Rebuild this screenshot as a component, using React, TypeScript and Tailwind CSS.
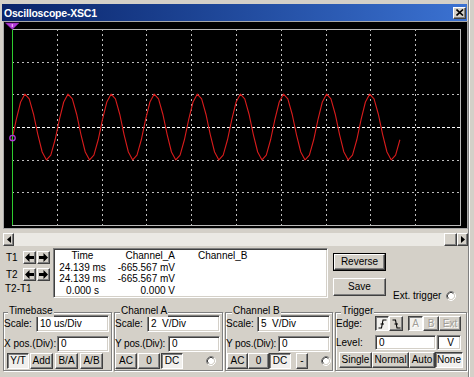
import React from "react";

const raised =
  "bg-[#d4d0c8] border border-t-white border-l-white border-r-[#404040] border-b-[#404040] shadow-[inset_-1px_-1px_0_#808080]";
const pressed =
  "bg-[#f1f0ed] border border-t-[#404040] border-l-[#404040] border-r-white border-b-white shadow-[inset_1px_1px_0_#808080]";
const sunken =
  "bg-white border border-t-[#808080] border-l-[#808080] border-r-white border-b-white shadow-[inset_1px_1px_0_#404040,inset_-1px_-1px_0_#d4d0c8]";
const etched =
  "relative border border-[#808080] shadow-[inset_1px_1px_0_#fff,1px_1px_0_#fff]";
const disabledText = "text-[#a09d96] [text-shadow:1px_1px_0_#fff]";

function Btn({
  className,
  on,
  children,
}: {
  className: string;
  on?: boolean;
  children?: React.ReactNode;
}) {
  return (
    <div
      className={`${on ? pressed : raised} flex items-center justify-center shrink-0 whitespace-nowrap ${className}`}
    >
      {children}
    </div>
  );
}

function Radio() {
  return (
    <svg width="10" height="10" viewBox="0 0 10 10" className="shrink-0">
      <circle cx="5" cy="5" r="3.5" fill="#fff" />
      <path d="M1.82 8.18 A4.5 4.5 0 0 1 8.18 1.82" fill="none" stroke="#808080" strokeWidth="1" />
      <path d="M2.5 7.5 A3.5 3.5 0 0 1 7.5 2.5" fill="none" stroke="#404040" strokeWidth="1" />
      <path d="M8.18 1.82 A4.5 4.5 0 0 1 1.82 8.18" fill="none" stroke="#ffffff" strokeWidth="1" />
      <path d="M7.5 2.5 A3.5 3.5 0 0 1 2.5 7.5" fill="none" stroke="#d4d0c8" strokeWidth="1" />
    </svg>
  );
}

function Arrow({ left }: { left?: boolean }) {
  return (
    <svg width="9" height="9" viewBox="0 0 9 9">
      <polygon
        points={left ? "0,4.5 4.5,0 4.5,3 9,3 9,6 4.5,6 4.5,9" : "9,4.5 4.5,0 4.5,3 0,3 0,6 4.5,6 4.5,9"}
        fill="#000"
      />
    </svg>
  );
}

function Input({ className, children }: { className: string; children?: React.ReactNode }) {
  return (
    <div className={`${sunken} flex items-center pl-[3px] shrink-0 whitespace-nowrap ${className}`}>{children}</div>
  );
}

function Scope() {
  const gx0 = 8;
  const gy0 = 7;
  const gw = 448;
  const gh = 196;
  const vlines = Array.from({ length: 9 }, (_, i) => Math.round(gx0 + (gw / 10) * (i + 1)) + 0.5);
  const hlines = Array.from({ length: 5 }, (_, i) => Math.round(gy0 + (gh / 6) * (i + 1)) + 0.5);
  const pts: string[] = [];
  const period = 43.1;
  const step = period / 10;
  for (let x = 12; x <= 401.5; x += step) {
    const y = 127 - 33 * Math.cos((2 * Math.PI * (x - 25.5)) / period);
    pts.push(`${(x - 4).toFixed(2)},${(y - 22).toFixed(2)}`);
  }
  return (
    <svg width="463" height="206" viewBox="0 0 463 206" className="block">
      <rect x="0" y="0" width="463" height="206" fill="#000" />
      {vlines.map((x) => (
        <line key={"v" + x} x1={x} y1={gy0} x2={x} y2={gy0 + gh} stroke="#bdbdbd" strokeDasharray="2 3" />
      ))}
      {hlines.map((y, i) => (
        <line
          key={"h" + y}
          x1={gx0}
          y1={y}
          x2={gx0 + gw}
          y2={y}
          stroke={i === 2 ? "#ffffff" : "#bdbdbd"}
          strokeDasharray={i === 2 ? "3 2" : "2 3"}
        />
      ))}
      <rect x={gx0 + 0.5} y={gy0 + 0.5} width={gw} height={gh} fill="none" stroke="#b8b8b8" />
      <polyline points={pts.join(" ")} fill="none" stroke="#d81c1c" strokeWidth="1.1" strokeLinejoin="round" />
      <line x1="8.5" y1={gy0} x2="8.5" y2={gy0 + gh} stroke="#2ecc2e" />
      <polygon points="1.5,1 15,1 8.25,7.5" fill="#b23cd8" stroke="#7a1aa0" strokeWidth="0.6" />
      <line x1="8.25" y1="2" x2="8.25" y2="5" stroke="#ffd0ff" />
      <circle cx="8.5" cy="116" r="2.7" fill="none" stroke="#b23cd8" strokeWidth="1.3" />
    </svg>
  );
}

export default function App() {
  return (
    <div className="w-[474px] h-[377px] bg-[#d4d0c8] overflow-hidden flex font-['Liberation_Sans',Arial,sans-serif] text-[10px] leading-[12px] text-black">
      <div className="w-[469px] h-full pl-[2px] pt-[4px] shrink-0 border-r border-r-[#808080]">
        {/* title bar */}
        <div className="w-[465px] h-[17px] bg-linear-to-r from-[#0a246a] to-[#3b72d2] flex items-center justify-between pl-[2px] pr-[1px]">
          <span className="text-white font-bold text-[10.5px] tracking-[-0.2px]">Oscilloscope-XSC1</span>
          <div className={`${raised} w-[13px] h-[12px] flex items-center justify-center`}>
            <svg width="8" height="7" viewBox="0 0 8 7">
              <path d="M0.5 0.5 L7 6.5 M7 0.5 L0.5 6.5" stroke="#000" strokeWidth="1.6" />
            </svg>
          </div>
        </div>

        {/* scope screen */}
        <div className="ml-[1px] w-[465px] h-[208px] border border-[#a8a8a8] bg-black">
          <Scope />
        </div>

        {/* scrollbar */}
        <div className="ml-[1px] mt-[4px] w-[465px] h-[13px] bg-[#ebe9e4] flex">
          <Btn className="w-[11px] h-[13px]">
            <svg width="4" height="7" viewBox="0 0 4 7">
              <polygon points="4,0 0,3.5 4,7" fill="#000" />
            </svg>
          </Btn>
          <div className="flex-1" />
          <Btn className="w-[13px] h-[13px]" />
          <Btn className="w-[11px] h-[13px]">
            <svg width="4" height="7" viewBox="0 0 4 7">
              <polygon points="0,0 4,3.5 0,7" fill="#000" />
            </svg>
          </Btn>
        </div>

        {/* measurement row */}
        <div className="ml-[1px] mt-[2px] h-[56px] flex items-start">
          <div className="w-[50px] shrink-0">
            <div className="mt-[3px] h-[13px] flex items-center">
              <span className="w-[20px] pl-[3px]">T1</span>
              <Btn className="w-[13px] h-[13px]">
                <Arrow left />
              </Btn>
              <Btn className="ml-[1px] w-[13px] h-[13px]">
                <Arrow />
              </Btn>
            </div>
            <div className="mt-[4px] h-[13px] flex items-center">
              <span className="w-[20px] pl-[3px]">T2</span>
              <Btn className="w-[13px] h-[13px]">
                <Arrow left />
              </Btn>
              <Btn className="ml-[1px] w-[13px] h-[13px]">
                <Arrow />
              </Btn>
            </div>
            <div className="mt-[2px] pl-[2px]">T2-T1</div>
          </div>

          <div className={`${sunken} w-[275px] h-[50px] pt-[1px] leading-[11.5px]`}>
            <div className="flex">
              <div className="w-[57px] text-center">Time</div>
              <div className="w-[64px] text-right">Channel_A</div>
              <div className="pl-[23px]">Channel_B</div>
            </div>
            <div className="flex">
              <div className="w-[57px] text-center">24.139 ms</div>
              <div className="w-[64px] text-right">-665.567 mV</div>
            </div>
            <div className="flex">
              <div className="w-[57px] text-center">24.139 ms</div>
              <div className="w-[64px] text-right">-665.567 mV</div>
            </div>
            <div className="flex">
              <div className="w-[57px] text-center">0.000 s</div>
              <div className="w-[64px] text-right">0.000 V</div>
            </div>
          </div>

          <div className="ml-[5px] w-[53px] shrink-0">
            <div className="mt-[5px] border border-black">
              <Btn className="w-full h-[16px]">Reverse</Btn>
            </div>
            <Btn className="mt-[7px] w-full h-[18px]">Save</Btn>
          </div>

          <div className="ml-[7px] self-end mb-[2px] h-[12px] flex items-center gap-[5px] whitespace-nowrap">
            <span>Ext. trigger</span>
            <Radio />
          </div>
        </div>

        {/* group boxes */}
        <div className="ml-[1px] mt-[8px] flex items-start">
          {/* Timebase */}
          <div className={`${etched} w-[109px] h-[59px] shrink-0`}>
            <span className="absolute -top-[8px] left-[4px] px-[1px] bg-[#d4d0c8] leading-[12px]">Timebase</span>
            <div className="mt-[2px] h-[17px] flex items-center justify-between pr-[2px]">
              <span className="whitespace-nowrap">Scale:</span>
              <Input className="w-[73px] h-[17px]">10 us/Div</Input>
            </div>
            <div className="mt-[4px] h-[16px] flex items-center justify-between pr-[2px]">
              <span className="whitespace-nowrap">X pos.(Div):</span>
              <Input className="w-[52px] h-[16px]">0</Input>
            </div>
            <div className="mt-[1px] h-[16px] flex items-center">
              <Btn on className="ml-[3px] w-[22px] h-[16px]">Y/T</Btn>
              <Btn className="ml-[1px] w-[23px] h-[16px]">Add</Btn>
              <Btn className="ml-[2px] w-[23px] h-[16px]">B/A</Btn>
              <Btn className="ml-[2px] w-[23px] h-[16px]">A/B</Btn>
            </div>
          </div>

          {/* Channel A */}
          <div className={`${etched} ml-[2px] w-[109px] h-[59px] shrink-0`}>
            <span className="absolute -top-[8px] left-[5px] px-[1px] bg-[#d4d0c8] leading-[12px] whitespace-nowrap">Channel A</span>
            <div className="mt-[2px] h-[17px] flex items-center justify-between pr-[2px]">
              <span className="whitespace-nowrap">Scale:</span>
              <Input className="w-[73px] h-[17px]">2&nbsp;&nbsp;V/Div</Input>
            </div>
            <div className="mt-[4px] h-[16px] flex items-center justify-between pr-[2px]">
              <span className="whitespace-nowrap tracking-[-0.15px]">Y pos.(Div):</span>
              <Input className="w-[52px] h-[16px]">0</Input>
            </div>
            <div className="mt-[1px] h-[16px] flex items-center">
              <Btn className="w-[22px] h-[16px]">AC</Btn>
              <Btn className="ml-[1px] w-[22px] h-[16px]">0</Btn>
              <Btn on className="ml-[1px] w-[22px] h-[16px]">DC</Btn>
              <div className="ml-[23px]">
                <Radio />
              </div>
            </div>
          </div>

          {/* Channel B */}
          <div className={`${etched} ml-[2px] w-[108px] h-[59px] shrink-0`}>
            <span className="absolute -top-[8px] left-[6px] px-[1px] bg-[#d4d0c8] leading-[12px] whitespace-nowrap">Channel B</span>
            <div className="mt-[2px] h-[17px] flex items-center justify-between pr-[2px]">
              <span className="whitespace-nowrap">Scale:</span>
              <Input className="w-[73px] h-[17px]">5&nbsp;&nbsp;V/Div</Input>
            </div>
            <div className="mt-[4px] h-[16px] flex items-center justify-between pr-[2px]">
              <span className="whitespace-nowrap tracking-[-0.15px] shrink-0">Y pos.(Div):</span>
              <Input className="w-[52px] h-[16px]">0</Input>
            </div>
            <div className="mt-[1px] h-[16px] flex items-center">
              <Btn className="ml-[1px] w-[21px] h-[16px]">AC</Btn>
              <Btn className="w-[21px] h-[16px]">0</Btn>
              <Btn on className="w-[22px] h-[16px]">DC</Btn>
              <Btn className="ml-[5px] w-[12px] h-[16px]">-</Btn>
              <div className="ml-[13px]">
                <Radio />
              </div>
            </div>
          </div>

          {/* Trigger */}
          <div className={`${etched} ml-[2px] w-[132px] h-[59px] shrink-0`}>
            <span className="absolute -top-[8px] left-[5px] px-[1px] bg-[#d4d0c8] leading-[12px]">Trigger</span>
            <div className="mt-[3px] h-[15px] flex items-center">
              <span className="w-[39px] shrink-0">Edge:</span>
              <Btn on className="w-[14px] h-[15px]">
                <svg width="9" height="10" viewBox="0 0 9 10">
                  <path d="M0.5 9 H3.5 L5 1 H8.5" fill="none" stroke="#000" strokeWidth="1.1" />
                  <path d="M2.5 5 H6" stroke="#000" strokeWidth="1" />
                </svg>
              </Btn>
              <Btn className="w-[14px] h-[15px]">
                <svg width="9" height="10" viewBox="0 0 9 10">
                  <path d="M0.5 1 H3.5 L5 9 H8.5" fill="none" stroke="#000" strokeWidth="1.1" />
                  <path d="M2.5 5 H6" stroke="#000" strokeWidth="1" />
                </svg>
              </Btn>
              <Btn on className={`ml-[5px] w-[15px] h-[15px] ${disabledText}`}>A</Btn>
              <Btn className={`w-[16px] h-[15px] ${disabledText}`}>B</Btn>
              <Btn className={`w-[22px] h-[15px] ${disabledText}`}>Ext</Btn>
            </div>
            <div className="mt-[4px] h-[15px] flex items-center">
              <span className="w-[39px] shrink-0">Level:</span>
              <Input className="w-[61px] h-[15px]">0</Input>
              <Input className="ml-[1px] w-[24px] h-[15px] justify-center pl-0">V</Input>
            </div>
            <div className="mt-[2px] h-[16px] flex items-center">
              <Btn className="ml-[3px] w-[33px] h-[16px]">Single</Btn>
              <Btn className="w-[37px] h-[16px]">Normal</Btn>
              <Btn className="w-[26px] h-[16px]">Auto</Btn>
              <Btn on className="w-[28px] h-[16px]">None</Btn>
            </div>
          </div>
        </div>
      </div>
      <div className="flex-1 bg-[#d4d0c8] border-l border-l-white" />
    </div>
  );
}
